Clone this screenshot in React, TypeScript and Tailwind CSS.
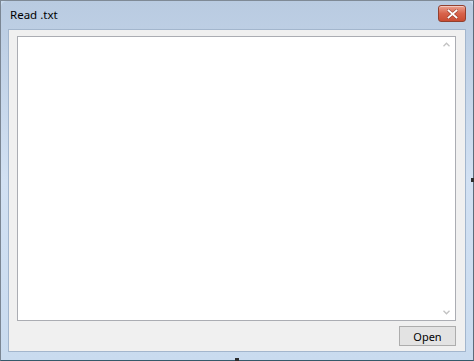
import { useState } from "react";

function CloseGlyph() {
  return (
    <svg width="11" height="10" viewBox="0 0 11 10" className="block">
      <path d="M1.5 1.5 L9.5 8.5 M9.5 1.5 L1.5 8.5" stroke="#7a2a22" strokeWidth="3" strokeLinecap="square" strokeOpacity="0.6" />
      <path d="M1.5 1.5 L9.5 8.5 M9.5 1.5 L1.5 8.5" stroke="#ffffff" strokeWidth="1.8" strokeLinecap="square" />
    </svg>
  );
}

function Chevron({ down }: { down?: boolean }) {
  return (
    <svg width="7" height="5" viewBox="0 0 7 5" className="block">
      <path
        d={down ? "M0.5 0.8 L3.5 3.8 L6.5 0.8" : "M0.5 4.2 L3.5 1.2 L6.5 4.2"}
        fill="none"
        stroke="#c2c2c2"
        strokeWidth="1.3"
      />
    </svg>
  );
}

export default function App() {
  const [text, setText] = useState("");

  return (
    <div
      className="relative h-[361px] w-[474px] border border-t-[#7f8a96] border-r-[#5b6b7a] border-b-[#35596a] border-l-[#7b8693] bg-[#c9dbef]"
      style={{ fontFamily: '"Noto Sans", "Liberation Sans", Arial, sans-serif' }}
    >
      <div className="flex h-full flex-col rounded-t-[6px] bg-gradient-to-b from-[#b9cbe1] via-[#d2e1f3] to-[#c9dbef] px-[7px] pb-[8px]">
        <header className="flex h-[28px] shrink-0 items-center justify-between pl-[2px]">
          <span className="text-[11.5px] leading-none text-black">Read .txt</span>
          <button
            type="button"
            aria-label="Close"
            className="mb-[3px] flex h-[17px] w-[28px] items-center justify-center rounded-[3px] border border-[#92402f] bg-gradient-to-b from-[#eaa08f] via-[#d8634b] to-[#c94c33] shadow-[inset_0_1px_0_rgba(255,255,255,0.45)]"
          >
            <CloseGlyph />
          </button>
        </header>

        <main className="flex flex-1 flex-col border border-[#a3b6cd] bg-[#f0f0f0] pt-[6px] pr-[9px] pb-[5px] pl-[8px]">
          <div className="flex flex-1 border border-[#abadb3] bg-white">
            <textarea
              value={text}
              onChange={(e) => setText(e.target.value)}
              className="flex-1 resize-none bg-white outline-none"
            />
            <div className="flex w-[17px] flex-col items-center justify-between bg-white py-[5px]">
              <Chevron />
              <Chevron down />
            </div>
          </div>

          <div className="flex justify-end pt-[5px]">
            <button
              type="button"
              className="h-[20px] w-[57px] border border-[#adadad] bg-[#e3e3e3] text-[11px] leading-none text-black"
            >
              Open
            </button>
          </div>
        </main>
      </div>

      <div className="absolute top-[177px] -right-px h-[4px] w-[3px] bg-[#2d2d2d]" />
      <div className="absolute -bottom-px left-[234px] h-[3px] w-[4px] bg-[#2d2d2d]" />
    </div>
  );
}
